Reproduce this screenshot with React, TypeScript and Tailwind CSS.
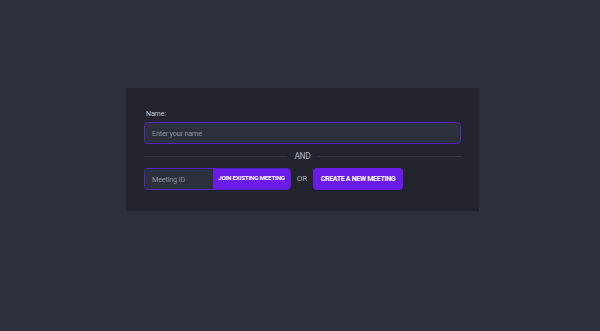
import React from "react";

export default function App() {
  return (
    <div
      className="w-[600px] h-[331px] bg-[#2b303b] flex items-start justify-center pt-[88px]"
      style={{ fontFamily: 'Roboto, "Noto Sans", sans-serif' }}
    >
      <div className="ml-[5px] w-[353px] h-[123px] bg-[#21242c] px-[18px] pt-[22px]">
        <div className="ml-[2px] text-[7px] leading-[9px] tracking-[-0.1px] text-[#c4c7cf]">Name:</div>
        <input
          className="mt-[3px] block w-full h-[22px] rounded-[4px] border border-[#5323c4] bg-[#2b303b] px-[7px] text-[7.3px] tracking-[-0.2px] text-[#c4c7cf] placeholder-[#8e929b] outline-none"
          placeholder="Enter your name"
        />
        <div className="flex items-center gap-[7px] h-[24px]">
          <div className="flex-1 h-px bg-[#30343e]" />
          <div className="text-[8.3px] tracking-[-0.2px] text-[#b8bbc3]">AND</div>
          <div className="flex-1 h-px bg-[#30343e]" />
        </div>
        <div className="flex items-center h-[22px]">
          <div className="flex h-[22px] w-[147px] rounded-[4px] border border-[#5323c4] overflow-hidden">
            <input
              className="w-[68px] h-full bg-[#2b303b] px-[7px] text-[7.3px] tracking-[-0.2px] text-[#c4c7cf] placeholder-[#8e929b] outline-none"
              placeholder="Meeting ID"
            />
            <button className="flex-1 h-full bg-[#6a1be6] text-white text-[6.2px] font-bold tracking-[-0.2px] whitespace-nowrap">
              JOIN EXISTING MEETING
            </button>
          </div>
          <div className="w-[22px] text-center text-[8px] text-[#a9acb4]">OR</div>
          <button className="h-[22px] w-[90px] rounded-[4px] bg-[#6a1be6] text-white text-[7px] font-bold tracking-[-0.3px] whitespace-nowrap">
            CREATE A NEW MEETING
          </button>
        </div>
      </div>
    </div>
  );
}
